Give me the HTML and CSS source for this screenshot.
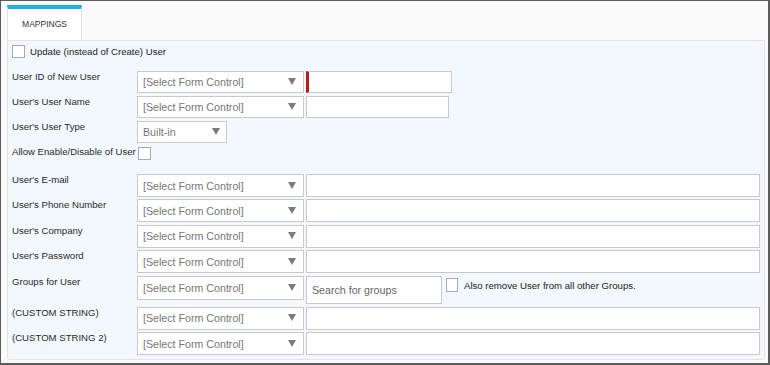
FILE: index.html
```html
<!DOCTYPE html>
<html lang="en">
<head>
	<meta charset="UTF-8">
	<title>Mappings</title>
	<link rel="stylesheet" href="styles.css">
</head>
<body>
	<div class="frame">
		<nav class="tabs">
			<div class="tab active">MAPPINGS</div>
		</nav>
		<section class="panel">
			<div class="check-row"><span class="check"></span>Update (instead of Create) User</div>

			<div class="field">
				<div class="label">User ID of New User</div>
				<div class="select"><span>[Select Form Control]</span><i class="arrow"></i></div>
				<input class="text required w146" type="text">
			</div>
			<div class="field">
				<div class="label">User's User Name</div>
				<div class="select"><span>[Select Form Control]</span><i class="arrow"></i></div>
				<input class="text w143" type="text">
			</div>
			<div class="field">
				<div class="label">User's User Type</div>
				<div class="select small"><span>Built-in</span><i class="arrow"></i></div>
			</div>
			<div class="field toggle">
				<div class="label">Allow Enable/Disable of User</div>
				<span class="check"></span>
			</div>

			<div class="field wide">
				<div class="label">User's E-mail</div>
				<div class="select"><span>[Select Form Control]</span><i class="arrow"></i></div>
				<input class="text grow" type="text">
			</div>
			<div class="field wide">
				<div class="label">User's Phone Number</div>
				<div class="select"><span>[Select Form Control]</span><i class="arrow"></i></div>
				<input class="text grow" type="text">
			</div>
			<div class="field wide">
				<div class="label">User's Company</div>
				<div class="select"><span>[Select Form Control]</span><i class="arrow"></i></div>
				<input class="text grow" type="text">
			</div>
			<div class="field wide">
				<div class="label">User's Password</div>
				<div class="select"><span>[Select Form Control]</span><i class="arrow"></i></div>
				<input class="text grow" type="text">
			</div>
			<div class="field groups">
				<div class="label">Groups for User</div>
				<div class="select"><span>[Select Form Control]</span><i class="arrow"></i></div>
				<input class="text search" type="text" placeholder="Search for groups">
				<span class="check"></span>
				<span class="note">Also remove User from all other Groups.</span>
			</div>
			<div class="field wide">
				<div class="label">(CUSTOM STRING)</div>
				<div class="select"><span>[Select Form Control]</span><i class="arrow"></i></div>
				<input class="text grow" type="text">
			</div>
			<div class="field wide">
				<div class="label">(CUSTOM STRING 2)</div>
				<div class="select"><span>[Select Form Control]</span><i class="arrow"></i></div>
				<input class="text grow" type="text">
			</div>
		</section>
	</div>
</body>
</html>
```

FILE: styles.css
```css
* {margin:0px;padding:0px;box-sizing:border-box;}
body {font-family:"Liberation Sans", Arial, sans-serif;color:#222;background:#fff;}
.frame {width:770px;height:365px;border:solid #5a5a5a;border-width:1px 2px 2px 1px;background:#fafafa;display:flex;flex-flow:column nowrap;padding:4px 3px 3px 6px;}

.tabs {flex:0 0 auto;display:flex;height:35px;}
.tab {width:75px;height:35px;border-top:4px solid #1ab1e8;border-left:1px solid #e2e2e2;border-right:1px solid #e2e2e2;background:#fff;font-size:8.5px;color:#333;text-align:center;line-height:30px;}

.panel {flex:1 1 auto;background:#f3f8fe;border:1px solid #e2e4e6;border-radius:0 0 3px 3px;padding:2px 4px 0 4px;}

.check {display:inline-block;flex:none;width:13px;height:13px;border:1px solid #a9a9a9;background:#fff;}
.check-row {display:flex;align-items:center;height:15px;font-size:9.6px;margin-bottom:13px;padding-top:1px;}
.check-row .check {margin-right:5px;}

.field {display:flex;flex-flow:row nowrap;align-items:flex-start;height:22px;margin-bottom:3px;}
.field .label {flex:none;width:125px;font-size:9.6px;line-height:12px;white-space:nowrap;color:#2a2a2a;}
.field.wide {height:23px;margin-bottom:2.4px;}
.field.wide > * {height:23px;}
.field.toggle {height:25px;}
.field.toggle .check {margin:1px 0 0 1px;}

.select {flex:none;width:167px;height:22px;margin-right:2px;border:1px solid #c9c9c9;background:#fff;display:flex;align-items:center;justify-content:space-between;padding:0 7px 0 5px;font-size:10.67px;color:#777;}
.select.small {width:90px;padding-right:6px;}
.arrow {display:block;width:0;height:0;border-left:4.5px solid transparent;border-right:4.5px solid transparent;border-top:7px solid #7c7c7c;margin-top:-1px;}

.text {height:22px;border:1px solid #c9c9c9;background:#fff;font-family:inherit;font-size:10.67px;padding:0 5px;outline:none;}
.text.required {border-left:3px solid #b51d1d;}
.w146 {width:146px;}
.w143 {width:143px;}
.grow {flex:1 1 auto;min-width:0;}
.text::placeholder {color:#666;}

.field.groups {height:28px;margin-bottom:3.4px;}
.field.groups .select {height:24.4px;}
.field.groups .search {width:136px;height:28px;}
.field.groups .check {width:12px;height:14px;margin:2.4px 6px 0 4px;}
.note {font-size:9.6px;line-height:12px;padding-top:4px;white-space:nowrap;}
```
